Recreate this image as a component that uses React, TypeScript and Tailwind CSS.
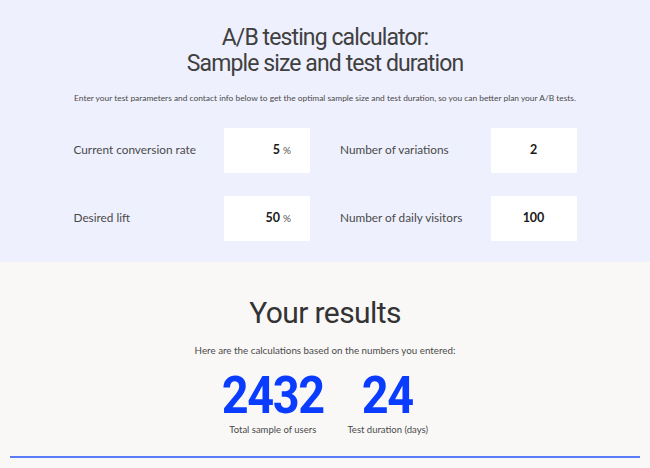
import React from "react";

function Field({ label, value, unit }: { label: string; value: string; unit?: string }) {
  return (
    <div className="flex items-center">
      <div className="flex-1 text-[11.8px] text-[#4a4a4a] font-['Lato',sans-serif]">{label}</div>
      <div className="w-[86px] h-[45px] bg-white flex items-center justify-center font-['Lato',sans-serif]">
        {unit ? (
          <div className="w-full flex justify-end pr-[19px] items-baseline gap-[3px]">
            <span className="text-[12.5px] font-bold text-[#1a1a1a]">{value}</span>
            <span className="text-[10px] text-[#555]">{unit}</span>
          </div>
        ) : (
          <span className="text-[12.5px] font-bold text-[#1a1a1a]">{value}</span>
        )}
      </div>
    </div>
  );
}

export default function App() {
  return (
    <div className="w-[650px] h-[468px] overflow-hidden bg-[#f9f8f7]">
      <div className="bg-[#eef0fd] h-[262px] pt-[25px] flex flex-col items-center">
        <h1 className="text-[23px] leading-[26px] font-normal text-[#404040] text-center tracking-[-0.9px] font-['Roboto',sans-serif]">
          A/B testing calculator:
          <br />
          Sample size and test duration
        </h1>
        <p className="mt-[15px] text-[8.4px] text-[#4a4a4a] font-['Lato',sans-serif]">
          Enter your test parameters and contact info below to get the optimal sample size and test duration, so you can better plan your A/B tests.
        </p>
        <div className="mt-[23px] w-[503px] grid grid-cols-2 gap-x-[30px] gap-y-[23px]">
          <Field label="Current conversion rate" value="5" unit="%" />
          <Field label="Number of variations" value="2" />
          <Field label="Desired lift" value="50" unit="%" />
          <Field label="Number of daily visitors" value="100" />
        </div>
      </div>
      <div className="flex flex-col items-center pt-[33px]">
        <h2 className="text-[30px] leading-[36px] font-normal text-[#333] tracking-[-0.6px] font-['Roboto',sans-serif]">Your results</h2>
        <p className="mt-[12px] text-[9.8px] text-[#4a4a4a] font-['Lato',sans-serif]">
          Here are the calculations based on the numbers you entered:
        </p>
        <div className="mt-[14px] flex gap-[18px] -translate-x-[3px]">
          <div className="flex flex-col items-center">
            <div className="text-[52px] leading-[48px] font-bold text-[#0a3cff] tracking-[-1.5px] scale-x-[0.9] font-['Roboto',sans-serif]">2432</div>
            <div className="text-[9.5px] text-[#4a4a4a] mt-[3px] font-['Lato',sans-serif]">Total sample of users</div>
          </div>
          <div className="flex flex-col items-center">
            <div className="text-[52px] leading-[48px] font-bold text-[#0a3cff] tracking-[-1.5px] scale-x-[0.9] font-['Roboto',sans-serif]">24</div>
            <div className="text-[9.5px] text-[#4a4a4a] mt-[3px] font-['Lato',sans-serif]">Test duration (days)</div>
          </div>
        </div>
        <div className="mt-[19px] w-[630px] h-[2px] bg-[#5b7cfa]" />
      </div>
    </div>
  );
}
